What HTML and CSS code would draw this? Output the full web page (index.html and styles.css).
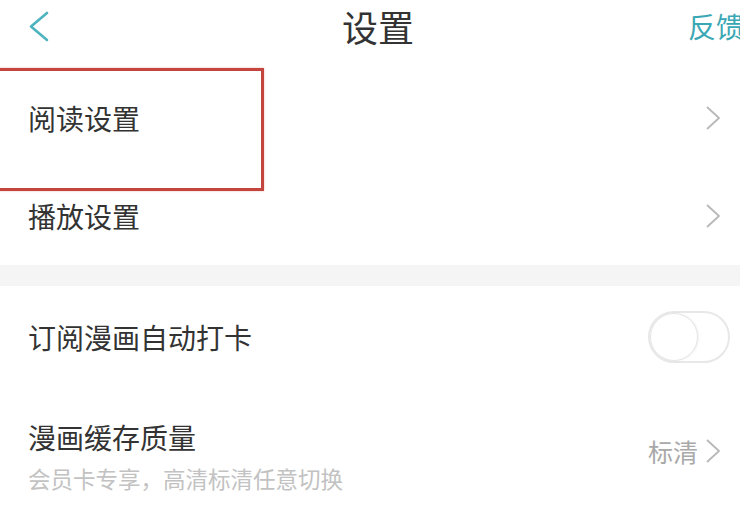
FILE: index.html
```html
<!DOCTYPE html>
<html lang="zh-CN">
<head>
<meta charset="utf-8">
<title>设置</title>
<link rel="stylesheet" href="styles.css">
</head>
<body>
<div class="page">
  <header class="topbar">
    <div class="back">
      <svg width="24" height="32" viewBox="0 0 24 32"><polyline points="19,3 3,16.5 19,30" fill="none" stroke="#4db3be" stroke-width="2.6" stroke-linecap="round" stroke-linejoin="round"/></svg>
    </div>
    <h1 class="title">设置</h1>
    <div class="feedback">反馈</div>
  </header>

  <section class="group">
    <div class="row">
      <span class="label">阅读设置</span>
      <svg class="chev" width="18" height="26" viewBox="0 0 18 26"><polyline points="3,2 15,13 3,24" fill="none" stroke="#b8b8b8" stroke-width="1.8" stroke-linejoin="round"/></svg>
    </div>
    <div class="row">
      <span class="label">播放设置</span>
      <svg class="chev" width="18" height="26" viewBox="0 0 18 26"><polyline points="3,2 15,13 3,24" fill="none" stroke="#b8b8b8" stroke-width="1.8" stroke-linejoin="round"/></svg>
    </div>
  </section>

  <div class="gap"></div>

  <section class="group">
    <div class="row row-toggle">
      <span class="label">订阅漫画自动打卡</span>
      <div class="toggle"><div class="knob"></div></div>
    </div>
    <div class="row row-tall">
      <div class="texts">
        <span class="label">漫画缓存质量</span>
        <span class="sub">会员卡专享，高清标清任意切换</span>
      </div>
      <div class="value">
        <span class="value-text">标清</span>
        <svg class="chev" width="18" height="26" viewBox="0 0 18 26"><polyline points="3,2 15,13 3,24" fill="none" stroke="#b8b8b8" stroke-width="1.8" stroke-linejoin="round"/></svg>
      </div>
    </div>
  </section>

  <div class="highlight"></div>
</div>
</body>
</html>
```

FILE: styles.css
```css
* { box-sizing: border-box; }
html, body {
  margin: 0;
  padding: 0;
  background: #ffffff;
  overflow: hidden;
}
body {
  font-family: "Noto Sans CJK SC", "Noto Sans", sans-serif;
  color: #333;
}
.page {
  position: relative;
  width: 740px;
  height: 519px;
  overflow: hidden;
}
.topbar {
  height: 69px;
  display: grid;
  grid-template-columns: 1fr auto 1fr;
  align-items: start;
  padding: 4px 0 0 0;
}
.back {
  height: 44px;
  display: flex;
  align-items: center;
  padding-left: 28px;
}
.back svg { display: block; }
.title {
  margin: 0 0 0 16px;
  font-size: 36px;
  font-weight: 400;
  line-height: 44px;
  color: #333;
}
.feedback {
  justify-self: end;
  margin-right: -4px;
  font-size: 28px;
  line-height: 44px;
  color: #3aa8b4;
  white-space: nowrap;
}
.row {
  height: 98px;
  display: flex;
  align-items: center;
  justify-content: space-between;
  padding: 0 18px 0 28px;
}
.label {
  font-size: 28px;
  line-height: 36px;
  color: #333;
}
.chev { display: block; }
.gap {
  height: 21px;
  background: #f5f5f5;
}
.row-toggle {
  height: 102px;
  padding-right: 10px;
}
.toggle {
  width: 82px;
  height: 52px;
  border: 2px solid #e8e8e8;
  border-radius: 26px;
  display: flex;
  align-items: center;
}
.knob {
  width: 48px;
  height: 48px;
  border-radius: 50%;
  background: #fff;
  border: 1.5px solid #e6e6e6;
  box-shadow: 1px 0 2px rgba(0,0,0,0.06);
}
.row-tall {
  height: 126px;
}
.texts {
  display: flex;
  flex-direction: column;
  gap: 8px;
  padding-top: 10px;
}
.sub {
  font-size: 22.5px;
  line-height: 30px;
  color: #c2c2c2;
}
.value {
  display: flex;
  align-items: center;
  gap: 6px;
}
.value-text {
  font-size: 25px;
  line-height: 30px;
  color: #a9a9a9;
}
.highlight {
  position: absolute;
  left: -6px;
  top: 68px;
  width: 270px;
  height: 123px;
  border: 3.5px solid #c4453d;
  box-shadow: 0 0 2px rgba(200,70,60,0.35);
  pointer-events: none;
}
```
